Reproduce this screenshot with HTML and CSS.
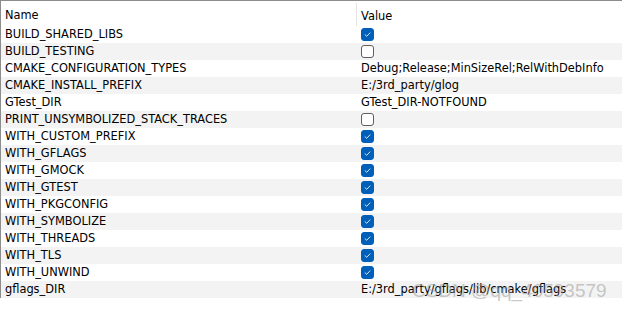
FILE: index.html
```html
<!DOCTYPE html>
<html>
<head>
<meta charset="utf-8">
<link rel="stylesheet" href="styles.css">
</head>
<body>
<div class="tree">
  <div class="head">
    <div class="hcell">Name</div>
    <div class="hcell hval">Value</div>
  </div>
  <div class="row"><div class="name">BUILD_SHARED_LIBS</div><div class="val"><span class="cb on"><svg viewBox="0 0 13 13"><path d="M3.6 6.8 L5.6 8.6 L9.4 4.6" /></svg></span></div></div>
  <div class="row"><div class="name">BUILD_TESTING</div><div class="val"><span class="cb"></span></div></div>
  <div class="row"><div class="name">CMAKE_CONFIGURATION_TYPES</div><div class="val">Debug;Release;MinSizeRel;RelWithDebInfo</div></div>
  <div class="row"><div class="name">CMAKE_INSTALL_PREFIX</div><div class="val">E:/3rd_party/glog</div></div>
  <div class="row"><div class="name">GTest_DIR</div><div class="val">GTest_DIR-NOTFOUND</div></div>
  <div class="row"><div class="name">PRINT_UNSYMBOLIZED_STACK_TRACES</div><div class="val"><span class="cb"></span></div></div>
  <div class="row"><div class="name">WITH_CUSTOM_PREFIX</div><div class="val"><span class="cb on"><svg viewBox="0 0 13 13"><path d="M3.6 6.8 L5.6 8.6 L9.4 4.6" /></svg></span></div></div>
  <div class="row"><div class="name">WITH_GFLAGS</div><div class="val"><span class="cb on"><svg viewBox="0 0 13 13"><path d="M3.6 6.8 L5.6 8.6 L9.4 4.6" /></svg></span></div></div>
  <div class="row"><div class="name">WITH_GMOCK</div><div class="val"><span class="cb on"><svg viewBox="0 0 13 13"><path d="M3.6 6.8 L5.6 8.6 L9.4 4.6" /></svg></span></div></div>
  <div class="row"><div class="name">WITH_GTEST</div><div class="val"><span class="cb on"><svg viewBox="0 0 13 13"><path d="M3.6 6.8 L5.6 8.6 L9.4 4.6" /></svg></span></div></div>
  <div class="row"><div class="name">WITH_PKGCONFIG</div><div class="val"><span class="cb on"><svg viewBox="0 0 13 13"><path d="M3.6 6.8 L5.6 8.6 L9.4 4.6" /></svg></span></div></div>
  <div class="row"><div class="name">WITH_SYMBOLIZE</div><div class="val"><span class="cb on"><svg viewBox="0 0 13 13"><path d="M3.6 6.8 L5.6 8.6 L9.4 4.6" /></svg></span></div></div>
  <div class="row"><div class="name">WITH_THREADS</div><div class="val"><span class="cb on"><svg viewBox="0 0 13 13"><path d="M3.6 6.8 L5.6 8.6 L9.4 4.6" /></svg></span></div></div>
  <div class="row"><div class="name">WITH_TLS</div><div class="val"><span class="cb on"><svg viewBox="0 0 13 13"><path d="M3.6 6.8 L5.6 8.6 L9.4 4.6" /></svg></span></div></div>
  <div class="row"><div class="name">WITH_UNWIND</div><div class="val"><span class="cb on"><svg viewBox="0 0 13 13"><path d="M3.6 6.8 L5.6 8.6 L9.4 4.6" /></svg></span></div></div>
  <div class="row"><div class="name">gflags_DIR</div><div class="val">E:/3rd_party/gflags/lib/cmake/gflags</div></div>
</div>
<div class="wm">CSDN @qq_40593579</div>
</body>
</html>
```
FILE: styles.css
```css
html, body {
  margin: 0;
  padding: 0;
  background: #fff;
}
body {
  width: 622px;
  height: 310px;
  overflow: hidden;
  position: relative;
  font-family: "DejaVu Sans", "Noto Sans", sans-serif;
  font-size: 11.4px;
  color: #000;
}
.tree {
  border-top: 1px solid #8c8c8c;
  border-left: 1px solid #8c8c8c;
  height: 297px;
}
.head {
  display: grid;
  grid-template-columns: 355px 1fr;
  height: 25px;
}
.hcell {
  padding-left: 4px;
  display: flex;
  align-items: center;
  padding-top: 2px;
}
.hval {
  border-left: 1px solid #e3e3e3;
  padding-left: 4px;
  margin: 2px 0 0 0;
}
.row {
  display: grid;
  grid-template-columns: 355px 1fr;
  height: 17px;
  line-height: 17px;
}
.row:nth-child(odd) {
  background: #f3f3f3;
}
.name {
  padding-left: 4px;
  white-space: nowrap;
}
.val {
  padding-left: 5px;
  white-space: nowrap;
  display: flex;
  align-items: center;
}
.cb {
  width: 11px;
  height: 11px;
  border: 1px solid #5f5f5f;
  border-radius: 3px;
  background: #fff;
  display: block;
}
.cb.on {
  background: #005fb8;
  border-color: #005fb8;
}
.cb svg {
  display: block;
  width: 11px;
  height: 11px;
  margin: 0;
}
.cb svg path {
  fill: none;
  stroke: #fff;
  stroke-width: 1;
  stroke-linecap: round;
  stroke-linejoin: round;
}
.wm {
  position: absolute;
  left: 412px;
  top: 281px;
  font-family: "Liberation Sans", Arial, sans-serif;
  font-size: 19px;
  line-height: 19px;
  color: rgba(150, 150, 150, 0.5);
  white-space: nowrap;
  pointer-events: none;
}
```
